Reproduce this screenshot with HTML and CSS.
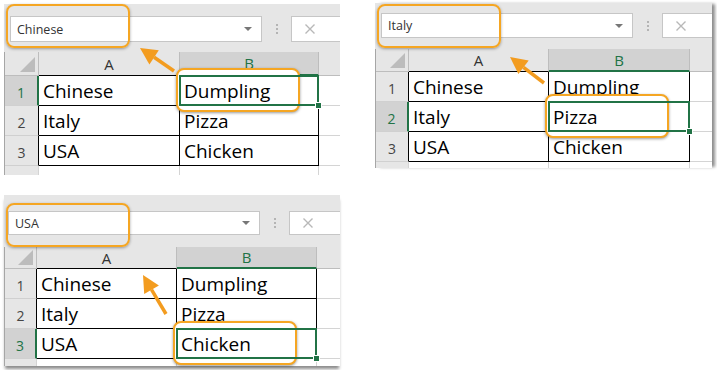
FILE: index.html
```html
<!DOCTYPE html>
<html lang="en">
<head>
    <meta charset="UTF-8">
    <meta name="viewport" content="width=device-width, initial-scale=1.0">
    <title>Name Box</title>
    <link rel="stylesheet" href="styles.css">
</head>
<body>
    <div class="board">

        <div class="panel panel-a">
            <div class="bar">
                <div class="namebox"><span class="callout-name"></span>Chinese<span class="drop"></span></div>
                <div class="dots"></div>
                <div class="xbox"><svg width="10" height="10" viewBox="0 0 10 10"><path d="M0.5 0.5L9.5 9.5M9.5 0.5L0.5 9.5"/></svg></div>
            </div>
            <div class="sheet">
                <div class="corner"></div>
                <div class="col-head">A</div>
                <div class="col-head active">B</div>
                <div class="col-head rest"></div>

                <div class="row-head active">1</div>
                <div class="cell data">Chinese</div>
                <div class="cell data selected"><span class="callout"></span>Dumpling<span class="handle"></span></div>
                <div class="cell rest"></div>

                <div class="row-head">2</div>
                <div class="cell data">Italy</div>
                <div class="cell data">Pizza</div>
                <div class="cell rest"></div>

                <div class="row-head">3</div>
                <div class="cell data">USA</div>
                <div class="cell data">Chicken</div>
                <div class="cell rest"></div>

                <div class="row-head last"></div>
                <div class="cell last"></div>
                <div class="cell last"></div>
                <div class="cell last rest"></div>
            </div>
            <svg class="arrow" viewBox="0 0 336 171">
                <line x1="170" y1="67" x2="150.1" y2="53.3"/>
                <polygon points="136,44 154.8,46.3 145.4,60.4"/>
            </svg>
        </div>

        <div class="panel panel-b">
            <div class="bar">
                <div class="namebox"><span class="callout-name"></span>Italy<span class="drop"></span></div>
                <div class="dots"></div>
                <div class="xbox"><svg width="10" height="10" viewBox="0 0 10 10"><path d="M0.5 0.5L9.5 9.5M9.5 0.5L0.5 9.5"/></svg></div>
            </div>
            <div class="sheet">
                <div class="corner"></div>
                <div class="col-head">A</div>
                <div class="col-head active">B</div>
                <div class="col-head rest"></div>

                <div class="row-head">1</div>
                <div class="cell data">Chinese</div>
                <div class="cell data">Dumpling</div>
                <div class="cell rest"></div>

                <div class="row-head active">2</div>
                <div class="cell data">Italy</div>
                <div class="cell data selected"><span class="callout"></span>Pizza<span class="handle"></span></div>
                <div class="cell rest"></div>

                <div class="row-head">3</div>
                <div class="cell data">USA</div>
                <div class="cell data">Chicken</div>
                <div class="cell rest"></div>

                <div class="row-head last"></div>
                <div class="cell last"></div>
                <div class="cell last"></div>
                <div class="cell last rest"></div>
            </div>
            <svg class="arrow" viewBox="0 0 337 165">
                <line x1="169" y1="80" x2="148.5" y2="64.3"/>
                <polygon points="135,54 153.7,57.5 143.4,71"/>
            </svg>
        </div>

        <div class="panel panel-c">
            <div class="bar">
                <div class="namebox"><span class="callout-name"></span>USA<span class="drop"></span></div>
                <div class="dots"></div>
                <div class="xbox"><svg width="10" height="10" viewBox="0 0 10 10"><path d="M0.5 0.5L9.5 9.5M9.5 0.5L0.5 9.5"/></svg></div>
            </div>
            <div class="sheet">
                <div class="corner"></div>
                <div class="col-head">A</div>
                <div class="col-head active">B</div>
                <div class="col-head rest"></div>

                <div class="row-head">1</div>
                <div class="cell data">Chinese</div>
                <div class="cell data">Dumpling</div>
                <div class="cell rest"></div>

                <div class="row-head">2</div>
                <div class="cell data">Italy</div>
                <div class="cell data">Pizza</div>
                <div class="cell rest"></div>

                <div class="row-head active">3</div>
                <div class="cell data">USA</div>
                <div class="cell data selected"><span class="callout"></span>Chicken<span class="handle"></span></div>
                <div class="cell rest"></div>

                <div class="row-head last"></div>
                <div class="cell last"></div>
                <div class="cell last"></div>
                <div class="cell last rest"></div>
            </div>
            <svg class="arrow" viewBox="0 0 336 171">
                <line x1="162" y1="119" x2="147.5" y2="94.7"/>
                <polygon points="139,80 154.9,90.5 140.2,99"/>
            </svg>
        </div>

    </div>
</body>
</html>
```

FILE: styles.css
```css
*
{
  margin: 0;
  padding: 0;
  box-sizing: border-box;
  font-family: "Open Sans", "Noto Sans", sans-serif;
}
body{
  background: #fff;
  width: 717px;
  height: 370px;
  overflow: hidden;
}
.board{
  display: grid;
  grid-template-columns: 336px 337px;
  column-gap: 35px;
  row-gap: 20px;
  align-items: start;
  padding: 3px 0 0 4px;
}
.panel{
  position: relative;
  display: flex;
  flex-direction: column;
  background: #e6e6e6;
  height: var(--h);
}
.panel-a{
  --h: 171px;
  --bar: 48px;
  --nb-top: 12px;
  --nb-h: 26px;
  --nb-left: 6px;
  --c0: 34px;
  --ca: 141px;
  --cb: 139px;
  --hh: 24px;
  --hl-x: -5px;
  --hl-y: -13px;
  margin-top: 1px;
}
.panel-b{
  --h: 165px;
  --bar: 46px;
  --nb-top: 10px;
  --nb-h: 25px;
  --nb-left: 6px;
  --c0: 33px;
  --ca: 140px;
  --cb: 141px;
  --hh: 23px;
  --hl-x: -5px;
  --hl-y: -10px;
  box-shadow: 4px 0 3px -1px rgba(0, 0, 0, 0.45);
}
.panel-c{
  --h: 171px;
  --bar: 52px;
  --nb-top: 16px;
  --nb-h: 24px;
  --nb-left: 4px;
  --c0: 32px;
  --ca: 140px;
  --cb: 140px;
  --hh: 22px;
  --hl-x: -3px;
  --hl-y: -9px;
  box-shadow: 0 4px 3px -1px rgba(0, 0, 0, 0.45);
}

/* formula bar */
.bar{
  height: var(--bar);
  display: flex;
  align-items: flex-start;
  padding: var(--nb-top) 0 0 var(--nb-left);
}
.namebox{
  position: relative;
  width: 252px;
  height: var(--nb-h);
  background: #fff;
  border: 1px solid #c6c6c6;
  display: flex;
  align-items: center;
  padding-left: 6px;
  font-size: 12.5px;
  color: #333;
}
.drop{
  position: absolute;
  right: 9px;
  top: 50%;
  margin-top: -2px;
  border-left: 4px solid transparent;
  border-right: 4px solid transparent;
  border-top: 4px solid #777;
}
.callout-name{
  position: absolute;
  left: var(--hl-x);
  top: var(--hl-y);
  width: 124px;
  height: 44px;
  border: 2px solid #f5a623;
  border-radius: 8px;
  box-shadow: 0 1px 3px rgba(0, 0, 0, 0.35);
  z-index: 3;
}
.dots{
  width: 2px;
  height: 10px;
  margin: calc(var(--nb-h) / 2 - 5px) 13px 0 14px;
  background: repeating-linear-gradient(#b4b4b4 0 2px, transparent 2px 4px);
}
.xbox{
  flex: 1;
  height: var(--nb-h);
  background: #fff;
  border: 1px solid #c6c6c6;
  border-right: none;
  display: flex;
  align-items: center;
  padding-left: 13px;
}
.xbox svg path{
  stroke: #b8b8b8;
  stroke-width: 1.4;
  fill: none;
}

/* sheet grid */
.sheet{
  flex: 1;
  display: grid;
  grid-template-columns: var(--c0) var(--ca) var(--cb) 1fr;
  grid-template-rows: var(--hh) 30px 30px 30px 1fr;
  border-left: 1px solid #a6a6a6;
}
.sheet > div{
  border-right: 1px solid #000;
  border-bottom: 1px solid #000;
}
.corner{
  position: relative;
  background: #e6e6e6;
  border-color: #bdbdbd !important;
}
.corner::after{
  content: '';
  position: absolute;
  right: 3px;
  bottom: 3px;
  width: 15px;
  height: 15px;
  background: #bcbcbc;
  clip-path: polygon(100% 0, 100% 100%, 0 100%);
}
.col-head{
  background: #e6e6e6;
  border-right-color: #bdbdbd !important;
  display: flex;
  justify-content: center;
  align-items: center;
  font-size: 15px;
  color: #333;
}
.col-head.rest{
  border-right: none !important;
  border-bottom-color: #bdbdbd !important;
}
.col-head.active{
  background: #d2d2d2;
  color: #217346;
  border-bottom: 2px solid #217346 !important;
}
.row-head{
  background: #e6e6e6;
  border-bottom-color: #d0d0d0 !important;
  display: flex;
  justify-content: center;
  align-items: center;
  padding-top: 3px;
  font-size: 14px;
  color: #444;
}
.row-head.active{
  background: #d2d2d2;
  color: #217346;
  border-right: 2px solid #217346 !important;
}
.cell{
  background: #fff;
  display: flex;
  align-items: center;
  padding: 1px 0 0 4px;
  font-size: 19px;
  color: #000;
  white-space: nowrap;
}
.cell.rest{
  border-right: none !important;
  border-bottom-color: #d4d4d4 !important;
}
.row-head.last,
.cell.last{
  border-bottom: none !important;
  border-right-color: #d4d4d4 !important;
}
.cell.last.rest{
  border-right: none !important;
}
.cell.selected{
  position: relative;
  z-index: 2;
}
.cell.selected::after{
  content: '';
  position: absolute;
  left: -1px;
  top: -1px;
  right: -1px;
  bottom: -1px;
  border: 2px solid #217346;
}
.callout{
  position: absolute;
  left: -4px;
  top: -8px;
  width: 124px;
  height: 44px;
  background: #fff;
  border: 2px solid #f5a623;
  border-radius: 8px;
  box-shadow: 0 1px 3px rgba(0, 0, 0, 0.4);
  z-index: -1;
}
.handle{
  position: absolute;
  right: -4px;
  bottom: -4px;
  width: 7px;
  height: 7px;
  background: #217346;
  border: 1px solid #fff;
  z-index: 1;
}
.arrow{
  position: absolute;
  left: 0;
  top: 0;
  width: 100%;
  height: 100%;
  pointer-events: none;
  z-index: 4;
}
.arrow line{
  stroke: #f39c1f;
  stroke-width: 3.5;
}
.arrow polygon{
  fill: #f39c1f;
}
```
